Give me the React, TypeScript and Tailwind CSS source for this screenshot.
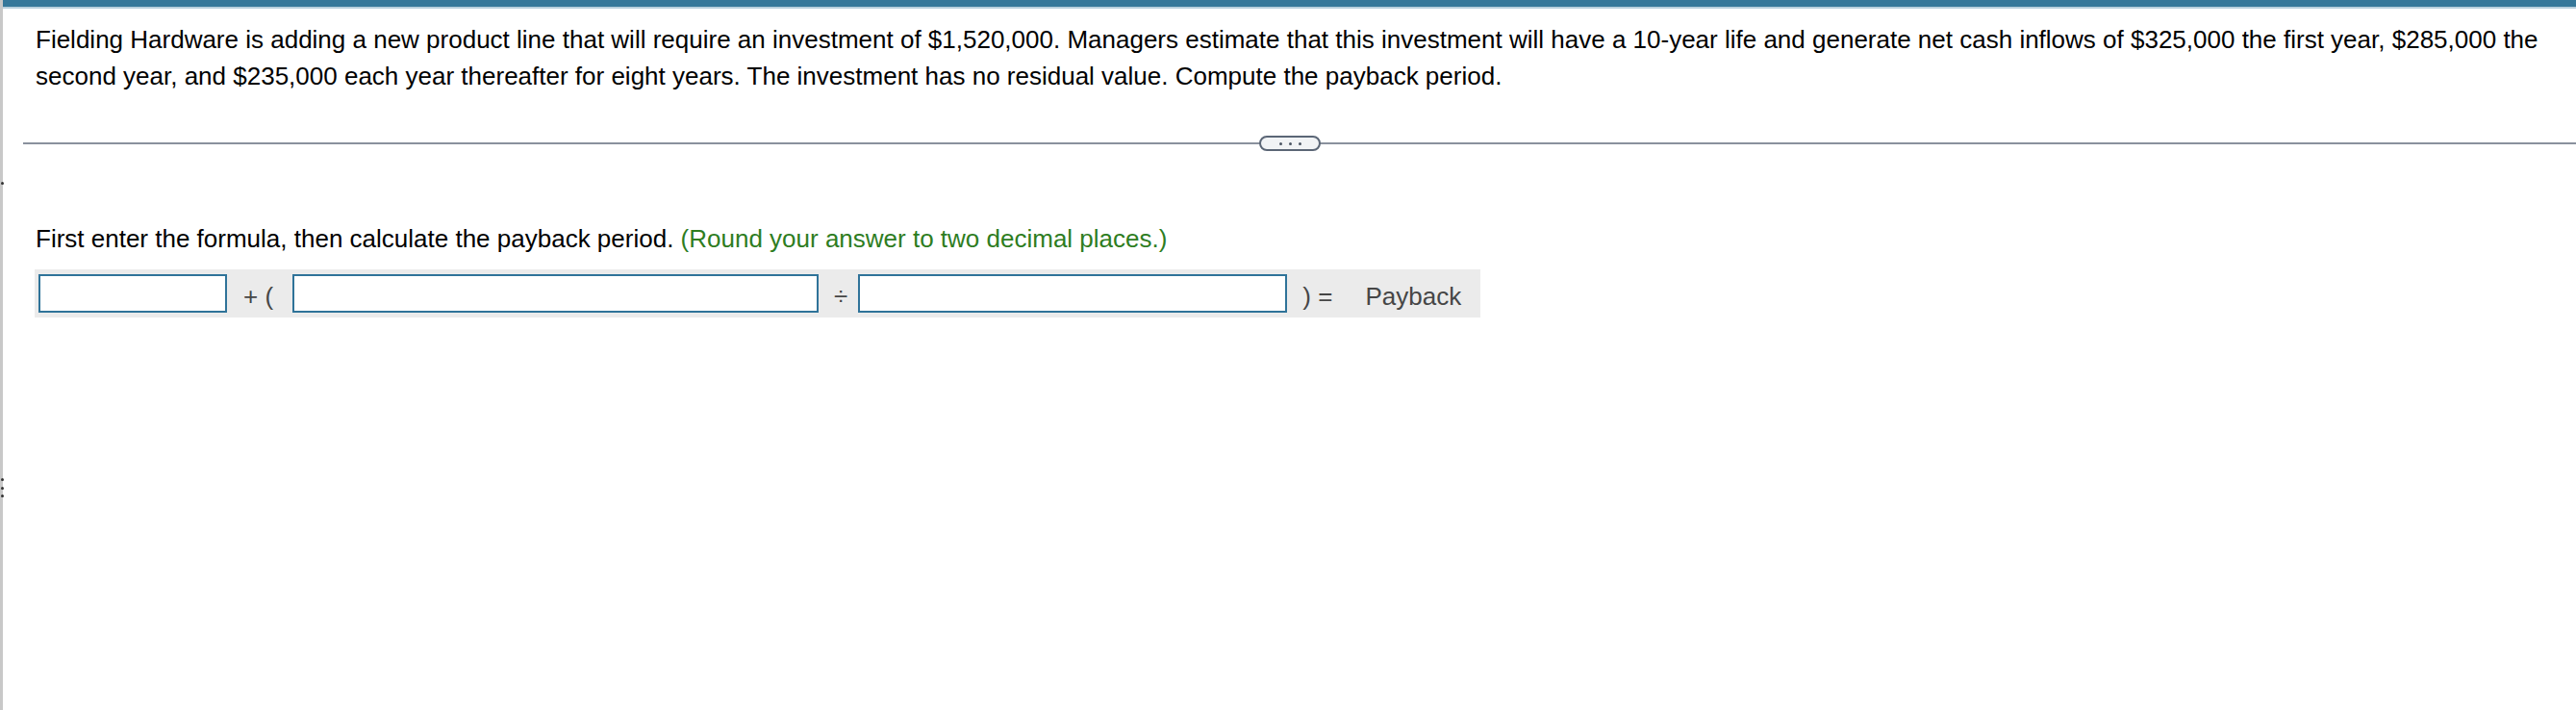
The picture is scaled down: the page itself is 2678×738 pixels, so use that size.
import React from 'react'

const font = { fontFamily: '"Liberation Sans", Arial, Helvetica, sans-serif' }

function Box({ w }: { w: string }) {
  return <div className={`h-[40px] border-2 border-[#2f7399] bg-white ${w}`} />
}

export default function App() {
  return (
    <div className="relative flex min-h-[738px] w-full bg-white text-black" style={font}>
      {/* left gutter */}
      <div className="relative w-[3px] shrink-0 bg-[#c8c8c8]">
        <span className="absolute left-[1px] top-[189px] h-[3px] w-[3px] rounded-full bg-[#333]" />
        <span className="absolute left-[1px] top-[497px] h-[3px] w-[3px] rounded-full bg-[#333]" />
        <span className="absolute left-[1px] top-[506px] h-[3px] w-[3px] rounded-full bg-[#333]" />
        <span className="absolute left-[1px] top-[514px] h-[3px] w-[3px] rounded-full bg-[#333]" />
      </div>

      <div className="flex min-w-0 flex-1 flex-col">
        <div className="h-[7px] bg-[#36789a]" />
        <div className="h-[2px] bg-[#b9d0dd]" />

        <p className="pl-[34px] pr-[12px] pt-[13px] text-[26px] leading-[38px]">
          Fielding Hardware is adding a new product line that will require an investment of $1,520,000. Managers
          estimate that this investment will have a 10-year life and generate net cash inflows of $325,000 the first
          year, $285,000 the second year, and $235,000 each year thereafter for eight years. The investment has no
          residual value. Compute the payback period.
        </p>

        {/* divider with expand pill */}
        <div className="relative ml-[21px] mt-[43px] flex h-[16px] items-center">
          <div className="h-[2px] flex-1 bg-[#8a919d]" />
          <div className="absolute left-[1285px] top-0 flex h-[16px] w-[64px] items-center justify-center gap-[7px] rounded-full border-2 border-[#5b6676] bg-[#f1f3f5]">
            <span className="h-[3px] w-[3px] rounded-full bg-[#4b5563]" />
            <span className="h-[3px] w-[3px] rounded-full bg-[#4b5563]" />
            <span className="h-[3px] w-[3px] rounded-full bg-[#4b5563]" />
          </div>
        </div>

        <p className="ml-[34px] mt-[72px] text-[26px] leading-[38px]">
          First enter the formula, then calculate the payback period.{' '}
          <span className="text-[#2e7d1f]">(Round your answer to two decimal places.)</span>
        </p>

        <div className="ml-[33px] mt-[13px] flex h-[50px] w-[1503px] items-center bg-[#ebebeb] pl-[4px] text-[26px] text-[#464646]">
          <Box w="w-[196px]" />
          <span className="ml-[17px] pt-[6px]">+ (</span>
          <div className="ml-[20px]">
            <Box w="w-[547px]" />
          </div>
          <span className="ml-[16px] pt-[6px]">÷</span>
          <div className="ml-[11px]">
            <Box w="w-[446px]" />
          </div>
          <span className="ml-[16px] pt-[6px]">) =</span>
          <span className="ml-[34px] pt-[6px]">Payback</span>
        </div>
      </div>
    </div>
  )
}
